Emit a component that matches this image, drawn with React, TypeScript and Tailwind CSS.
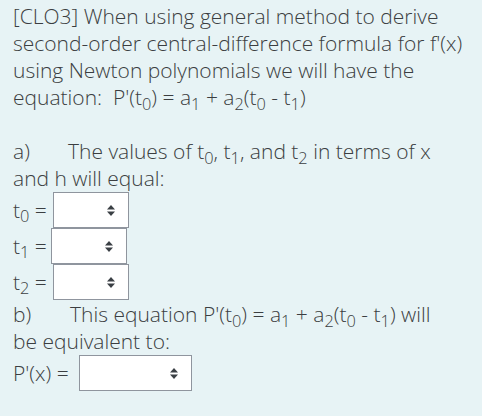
import React from "react";

function Sub({ children }: { children: React.ReactNode }) {
  return <sub className="relative top-[0.3em] align-baseline text-[0.78em]">{children}</sub>;
}

function SelectBox({ className = "" }: { className?: string }) {
  return (
    <span
      className={`inline-flex h-[36px] items-center justify-end border border-[#8f959e] bg-white pr-[13px] align-middle ${className}`}
    >
      <svg width="8" height="11" viewBox="0 0 8 11" className="fill-[#3a3f44]">
        <path d="M4 0 L8 4.5 H0 Z" />
        <path d="M0 6.5 H8 L4 11 Z" />
      </svg>
    </span>
  );
}

export default function App() {
  return (
    <div className="h-[416px] w-[490px] bg-white">
      <div
        className="h-full w-[482px] bg-[#e7f3f5] pl-[13px] pt-[3px] text-[21px] font-light leading-[27px] text-[#3b3e41]"
        style={{ fontFamily: '"Open Sans", "Noto Sans", sans-serif' }}
      >
        <div className="whitespace-nowrap">
          [CLO3] When using general method to derive
          <br />
          second-order central-difference formula for f'(x)
          <br />
          using Newton polynomials we will have the
          <br />
          equation:&nbsp; P'(t<Sub>0</Sub>) = a<Sub>1</Sub> + a<Sub>2</Sub>(t<Sub>0</Sub> - t<Sub>1</Sub>)
        </div>
        <div className="h-[27px]" />
        <div className="whitespace-nowrap">
          <span className="inline-block w-[55px]">a)</span>The values of t<Sub>0</Sub>, t<Sub>1</Sub>, and t
          <Sub>2</Sub> in terms of x
          <br />
          and h will equal:
        </div>
        <div className="flex flex-col">
          <div className="flex h-[36px] items-center">
            <span className="w-[40px] whitespace-nowrap">
              t<Sub>0</Sub> =
            </span>
            <SelectBox className="w-[76px]" />
          </div>
          <div className="flex h-[36px] items-center">
            <span className="w-[38px] whitespace-nowrap">
              t<Sub>1</Sub> =
            </span>
            <SelectBox className="w-[76px]" />
          </div>
          <div className="flex h-[36px] items-center">
            <span className="w-[40px] whitespace-nowrap">
              t<Sub>2</Sub> =
            </span>
            <SelectBox className="w-[76px]" />
          </div>
        </div>
        <div className="mt-[1px] whitespace-nowrap">
          <span className="inline-block w-[57px]">b)</span>This equation P'(t<Sub>0</Sub>) = a<Sub>1</Sub> + a
          <Sub>2</Sub>(t<Sub>0</Sub> - t<Sub>1</Sub>) will
          <br />
          be equivalent to:
        </div>
        <div className="flex h-[36px] items-center">
          <span className="w-[66px] whitespace-nowrap">P'(x) =</span>
          <SelectBox className="w-[113px]" />
        </div>
      </div>
    </div>
  );
}
